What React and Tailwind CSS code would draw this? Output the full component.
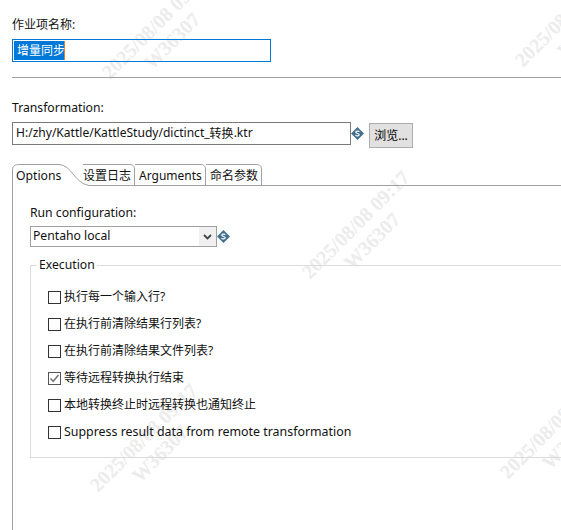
import React from "react";

function VarIcon() {
  return (
    <svg width="13" height="13" viewBox="0 0 13 13" className="shrink-0">
      <path d="M6.5 0 L13 6.5 L6.5 13 L0 6.5 Z" fill="#44708f" />
      <path d="M8.4 4.7 C7.6 3.7 4.8 3.8 4.8 5.3 C4.8 6.9 8.3 6.1 8.2 7.8 C8.1 9.2 5.3 9.3 4.5 8.2" fill="none" stroke="#fff" strokeWidth="1.2" />
    </svg>
  );
}

function Watermark({ pos }) {
  return (
    <div className={`absolute pointer-events-none -translate-x-1/2 -translate-y-1/2 -rotate-45 whitespace-nowrap text-center font-bold text-[20px] leading-[23px] text-[#ececec] font-['Liberation_Serif',serif] ${pos}`}>
      <div>2025/08/08 09:17</div>
      <div>W36307</div>
    </div>
  );
}

function L({ children }) {
  return <span className="text-[12.2px]">{children}</span>;
}

function Check({ label, checked }) {
  return (
    <div className="flex items-center h-[27px]">
      {checked ? (
        <span className="w-[13px] h-[13px] border border-[#555555] flex items-center justify-center shrink-0">
          <svg width="11" height="11" viewBox="0 0 11 11">
            <path d="M1.5 5.5 L4.2 8.3 L9.5 2" fill="none" stroke="#777777" strokeWidth="1.5" />
          </svg>
        </span>
      ) : (
        <span className="w-[13px] h-[13px] border border-[#333333] shrink-0" />
      )}
      <span className="ml-[3px] text-[#111111] whitespace-nowrap relative -top-px">{label}</span>
    </div>
  );
}

function Tab({ w, label, pad }) {
  return (
    <div className={`relative h-[22px] border-b border-[#a0a0a0] ${w}`}>
      <svg className="absolute right-0 top-0" width="6" height="22" viewBox="0 0 6 22">
        <path d="M0 0.5 C3 0.5 5.5 1.5 5.5 5 L5.5 21" fill="none" stroke="#a0a0a0" />
      </svg>
      <div className={`h-full border-t border-[#a0a0a0] mr-[5px] pt-[2px] flex items-center text-[#111111] whitespace-nowrap ${pad}`}>{label}</div>
    </div>
  );
}

export default function App() {
  return (
    <div className="relative w-[561px] h-[530px] overflow-hidden bg-white text-[12px] text-[#111111] font-['Noto_Sans','Noto_Sans_CJK_SC',sans-serif]">
      <Watermark pos="left-[164px] top-[33px]" />
      <Watermark pos="left-[364px] top-[233px]" />
      <Watermark pos="left-[577px] top-[21px]" />
      <Watermark pos="left-[152px] top-[446px]" />
      <Watermark pos="left-[562px] top-[433px]" />

      <div className="relative flex flex-col pl-[12px]">
        <div className="h-[20px] mt-[15px] flex items-center whitespace-nowrap">作业项名称:</div>
        <div className="mt-[4px] w-[259px] h-[23px] border border-[#0078d7] pl-[1px] flex items-center">
          <span className="bg-[#0078d7] text-white h-[19px] w-[51px] border-r border-[#e08030] flex items-center pl-[3px] whitespace-nowrap">增量同步</span>
        </div>
        <div className="mt-[15px] h-px bg-[#a0a0a0]" />
        <div className="mt-[21px] h-[18px] flex items-center"><L>Transformation:</L></div>
        <div className="mt-[5px] flex items-start">
          <div className="w-[339px] h-[23px] border border-[#7a7a7a] pl-[3px] flex items-center whitespace-nowrap"><span className="text-[12.05px]">H:/zhy/Kattle/KattleStudy/dictinct_</span>转换<span className="text-[12.05px]">.ktr</span></div>
          <div className="mt-[5px]"><VarIcon /></div>
          <div className="ml-[5px] mt-[1px] w-[44px] h-[25px] bg-[#e1e1e1] border border-[#adadad] flex items-center justify-center text-black whitespace-nowrap">浏览...</div>
        </div>

        <div className="mt-[16px] flex h-[22px]">
          <div className="relative w-[78px] h-[22px]">
            <svg className="absolute left-0 top-0" width="78" height="22" viewBox="0 0 78 22">
              <path d="M0.5 22 L0.5 6 C0.5 2 3 0.5 7 0.5 L47 0.5 C60 1 62 19 77 21.5 L78 21.5" fill="none" stroke="#a0a0a0" />
            </svg>
            <div className="relative pl-[4px] pt-[2px] h-[22px] flex items-center text-[#111111]"><L>Options</L></div>
          </div>
          <Tab w="w-[45px]" pad="-ml-[7px] relative" label="设置日志" />
          <Tab w="w-[71px]" pad="pl-[4px]" label={<span className="text-[12px]">Arguments</span>} />
          <Tab w="w-[56px]" pad="pl-[4px]" label="命名参数" />
          <div className="flex-1 h-[22px] border-b border-[#a0a0a0]" />
        </div>

        <div className="h-[346px] border-l border-[#a0a0a0] pl-[17px]">
          <div className="mt-[18px] h-[18px] flex items-center"><L>Run configuration:</L></div>
          <div className="mt-[4px] flex items-center">
            <div className="w-[187px] h-[21px] border border-[#a0a0a0] flex items-center pl-[2px]">
              <span className="flex-1"><L>Pentaho local</L></span>
              <span className="w-[17px] h-[19px] bg-[#f0f0f0] flex items-center justify-center">
                <svg width="9" height="6" viewBox="0 0 9 6"><path d="M1 1 L4.5 4.5 L8 1" fill="none" stroke="#444444" strokeWidth="1.8" /></svg>
              </span>
            </div>
            <VarIcon />
          </div>

          <div className="relative mt-[18px] w-[540px] h-[193px] border border-[#dcdcdc] pl-[17px] pt-[18px]">
            <div className="absolute left-[6px] -top-[10px] bg-white px-[2px] h-[18px] flex items-center"><L>Execution</L></div>
            <Check label="执行每一个输入行?" />
            <Check label="在执行前清除结果行列表?" />
            <Check label="在执行前清除结果文件列表?" />
            <Check label="等待远程转换执行结束" checked />
            <Check label="本地转换终止时远程转换也通知终止" />
            <Check label={<span className="text-[12.4px] relative top-px">Suppress result data from remote transformation</span>} />
          </div>
        </div>
      </div>
    </div>
  );
}
